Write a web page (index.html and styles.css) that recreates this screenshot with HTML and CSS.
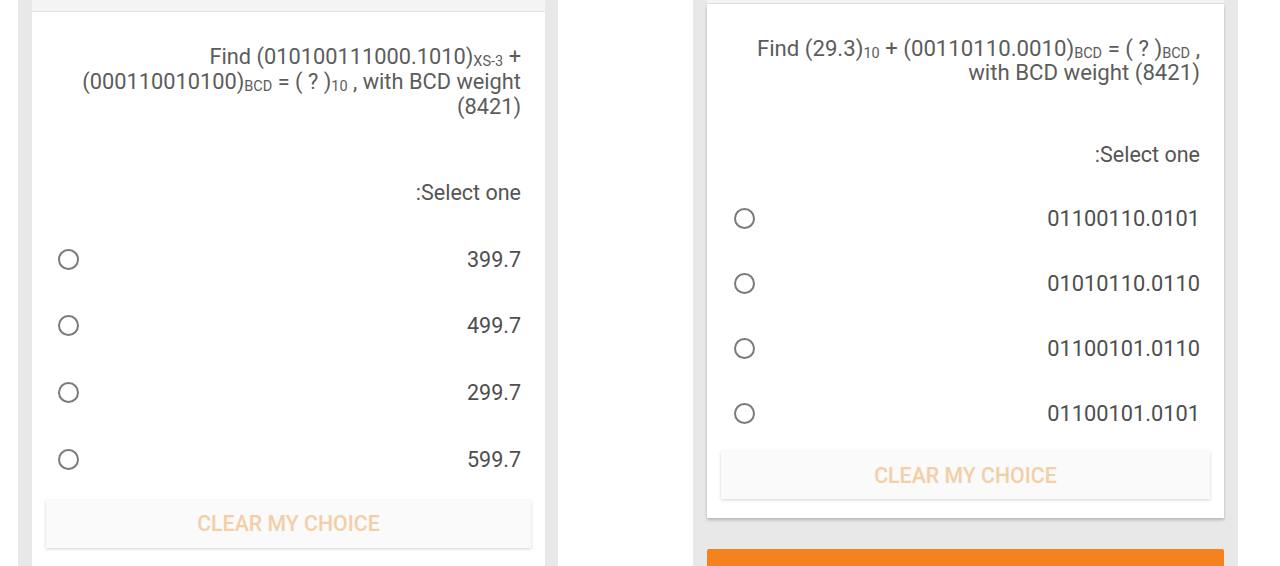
FILE: index.html
```html
<!DOCTYPE html>
<html>
<head>
<meta charset="utf-8">
<link rel="stylesheet" href="styles.css">
</head>
<body>
<div class="page">
  <section class="screen screen-left">
    <div class="stub stub-left"></div>
    <div class="card card-left">
      <div class="question q-left">
        Find (010100111000.1010)<sub>XS-3</sub> +<br>
        (000110010100)<sub>BCD</sub> = ( ? )<sub>10</sub> , with BCD weight<br>
        (8421)
      </div>
      <div class="prompt prompt-left">:Select one</div>
      <div class="options opts-left">
        <div class="option"><span class="radio"></span><span class="val">399.7</span></div>
        <div class="option"><span class="radio"></span><span class="val">499.7</span></div>
        <div class="option"><span class="radio"></span><span class="val">299.7</span></div>
        <div class="option"><span class="radio"></span><span class="val">599.7</span></div>
      </div>
      <div class="clear clear-left">CLEAR MY CHOICE</div>
    </div>
  </section>
  <section class="screen screen-right">
    <div class="stub stub-right"></div>
    <div class="card card-right">
      <div class="question q-right">
        Find (29.3)<sub>10</sub> + (00110110.0010)<sub>BCD</sub> = ( ? )<sub>BCD</sub> ,<br>
        with BCD weight (8421)
      </div>
      <div class="prompt prompt-right">:Select one</div>
      <div class="options opts-right">
        <div class="option"><span class="radio"></span><span class="val">01100110.0101</span></div>
        <div class="option"><span class="radio"></span><span class="val">01010110.0110</span></div>
        <div class="option"><span class="radio"></span><span class="val">01100101.0110</span></div>
        <div class="option"><span class="radio"></span><span class="val">01100101.0101</span></div>
      </div>
      <div class="clear clear-right">CLEAR MY CHOICE</div>
    </div>
    <div class="next"></div>
  </section>
</div>
</body>
</html>
```

FILE: styles.css
```css
html, body {
  margin: 0;
  padding: 0;
  background: #ffffff;
  font-family: Roboto, "Liberation Sans", Arial, sans-serif;
  color: #555555;
  overflow: hidden;
  height: 566px;
}

.page {
  display: flex;
  align-items: flex-start;
  height: 566px;
}

.screen {
  background: #e8e8e8;
  height: 566px;
  display: flex;
  flex-direction: column;
  box-sizing: border-box;
}

.screen-left {
  margin-left: 18px;
  width: 540px;
  padding: 0 13px 0 14px;
}

.screen-right {
  margin-left: 135px;
  width: 545px;
  padding: 0 14px;
}

.stub {
  background: #f4f4f4;
  flex: none;
}

.stub-left {
  height: 11px;
  border-bottom: 1px solid #e2e2e2;
}

.stub-right {
  height: 3px;
  border-bottom: 1px solid #e2e2e2;
}

.card {
  background: #ffffff;
  box-sizing: border-box;
  padding-top: 32px;
  display: flex;
  flex-direction: column;
  flex: none;
}

.card-left {
  padding-left: 14px;
  padding-right: 14px;
  flex: 1;
}

.card-right {
  padding-left: 14px;
  padding-right: 14px;
  padding-bottom: 19px;
  box-shadow: 0 2px 3px rgba(0,0,0,0.22);
}

.question {
  text-align: right;
  color: #5c5c5c;
  padding-right: 10px;
}

.q-left { font-size: 21.8px; line-height: 25px; }
.q-right { font-size: 22.2px; line-height: 24px; }

.question sub {
  font-size: 14.5px;
  vertical-align: -2px;
  line-height: 0;
}

.prompt {
  text-align: right;
  color: #555555;
  padding-right: 10px;
}

.prompt-left { font-size: 21.5px; line-height: 25px; margin-top: 61px; }
.prompt-right { font-size: 21.5px; line-height: 24px; margin-top: 59px; }

.options {
  display: flex;
  flex-direction: column;
}

.opts-left { margin-top: 21px; }
.opts-right { margin-top: 19px; }

.option {
  display: flex;
  align-items: center;
  justify-content: space-between;
  padding: 0 10px 0 12px;
}

.opts-left .option { height: 66.67px; }
.opts-right .option { height: 65px; padding-left: 13px; }

.opts-left .val { font-size: 21.5px; }
.opts-right .val { font-size: 21.8px; }

.radio {
  width: 17px;
  height: 17px;
  border: 2px solid #7a7a7a;
  border-radius: 50%;
  flex: none;
}

.val {
  color: #4e4e4e;
}

.clear {
  height: 48px;
  display: flex;
  align-items: center;
  justify-content: center;
  background: #fafafa;
  color: #f2cfa6;
  font-size: 21.3px;
  font-weight: 500;
  box-shadow: 0 1px 3px rgba(0,0,0,0.18);
  flex: none;
}

.clear-left { margin-top: 7px; }
.clear-right { margin-top: 5px; }

.next {
  margin-top: 31px;
  height: 40px;
  background: #f5821f;
  border-radius: 2px 2px 0 0;
  flex: none;
}
```
